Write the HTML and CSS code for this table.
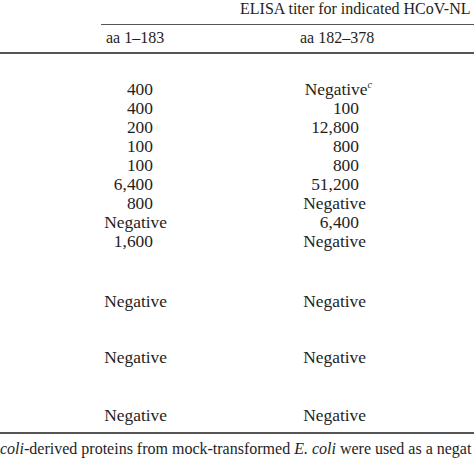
FILE: index.html
```html
<!DOCTYPE html>
<html>
<head>
<meta charset="utf-8">
<link rel="stylesheet" href="styles.css">
</head>
<body>
<div class="page">
  <div class="span-head">ELISA titer for indicated HCoV-NL</div>
  <div class="col-head">
    <div class="ch ch1">aa 1–183</div>
    <div class="ch ch2">aa 182–378</div>
  </div>
  <div class="body">
    <div class="row"><div class="c1">400</div><div class="c2 negc">Negative<sup>c</sup></div></div>
    <div class="row"><div class="c1">400</div><div class="c2">100</div></div>
    <div class="row"><div class="c1">200</div><div class="c2">12,800</div></div>
    <div class="row"><div class="c1">100</div><div class="c2">800</div></div>
    <div class="row"><div class="c1">100</div><div class="c2">800</div></div>
    <div class="row"><div class="c1">6,400</div><div class="c2">51,200</div></div>
    <div class="row"><div class="c1">800</div><div class="c2 neg">Negative</div></div>
    <div class="row"><div class="c1 neg">Negative</div><div class="c2">6,400</div></div>
    <div class="row"><div class="c1">1,600</div><div class="c2 neg">Negative</div></div>
    <div class="row gap-a"><div class="c1 neg">Negative</div><div class="c2 neg">Negative</div></div>
    <div class="row gap-b"><div class="c1 neg">Negative</div><div class="c2 neg">Negative</div></div>
    <div class="row gap-c"><div class="c1 neg">Negative</div><div class="c2 neg">Negative</div></div>
  </div>
  <div class="foot"><i>coli</i>-derived proteins from mock-transformed <i>E. coli</i> were used as a negat</div>
</div>
</body>
</html>
```
FILE: styles.css
```css
html, body {
  margin: 0;
  padding: 0;
  background: #fff;
}
.page {
  width: 474px;
  height: 474px;
  overflow: hidden;
  font-family: "Liberation Serif", "Times New Roman", serif;
  color: #1e1e1e;
}
.span-head {
  margin-left: 101px;
  padding-left: 139px;
  height: 24px;
  line-height: 18px;
  font-size: 16px;
  white-space: nowrap;
  border-bottom: 1px solid #555;
}
.col-head {
  display: grid;
  grid-template-columns: 240px 234px;
  padding: 4px 0 5px;
  border-bottom: 2px solid #555;
  font-size: 16px;
  line-height: 18px;
  white-space: nowrap;
}
.ch1 { padding-left: 106px; }
.ch2 { padding-left: 60px; }
.body {
  padding-top: 26px;
  padding-bottom: 7px;
  border-bottom: 2px solid #555;
}
.row {
  display: grid;
  grid-template-columns: 240px 234px;
  font-size: 17.4px;
  line-height: 19px;
  white-space: nowrap;
  text-align: right;
}
.c1 { padding-right: 87px; }
.c1.neg { padding-right: 73px; }
.c2 { padding-right: 115px; }
.c2.neg { padding-right: 108px; }
.c2.negc { padding-right: 102px; }
sup {
  font-size: 10px;
  font-style: italic;
  line-height: 0;
  vertical-align: 7px;
}
.gap-a { margin-top: 41px; }
.gap-b { margin-top: 37px; }
.gap-c { margin-top: 39px; }
.foot {
  padding-top: 5px;
  font-size: 16px;
  line-height: 19px;
  white-space: nowrap;
}
```
